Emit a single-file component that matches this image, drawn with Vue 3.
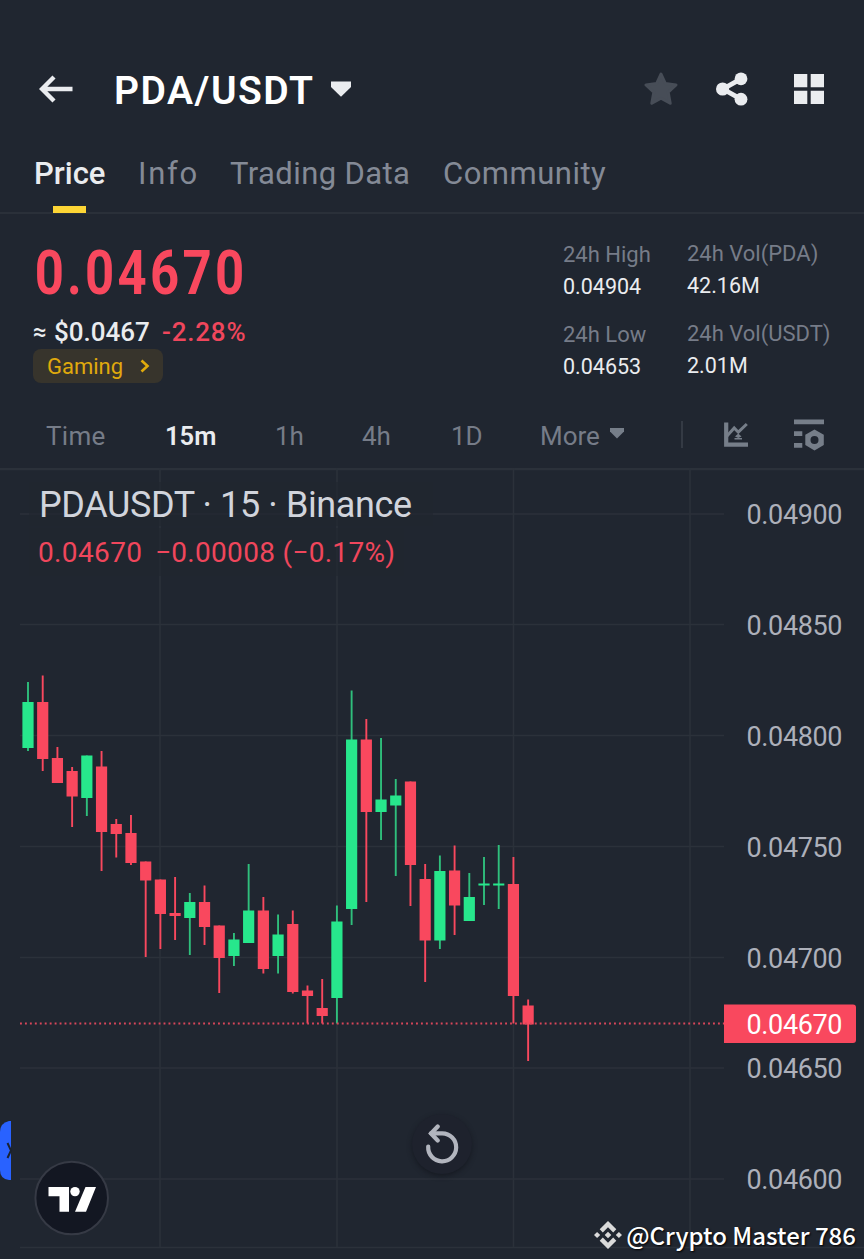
<script setup>
import { ref } from 'vue'

const tabs = ['Price', 'Info', 'Trading Data', 'Community']
const activeTab = ref('Price')

const intervals = ['Time', '15m', '1h', '4h', '1D']
const activeInterval = ref('15m')

const stats = [
  { label: '24h High', value: '0.04904' },
  { label: '24h Vol(PDA)', value: '42.16M' },
  { label: '24h Low', value: '0.04653' },
  { label: '24h Vol(USDT)', value: '2.01M' }
]

const gridX = [160, 337, 513.5, 690]
const priceLevels = [
  { label: '0.04900', y: 46 },
  { label: '0.04850', y: 156.5 },
  { label: '0.04800', y: 267.5 },
  { label: '0.04750', y: 378.5 },
  { label: '0.04700', y: 489.5 },
  { label: '0.04650', y: 600 },
  { label: '0.04600', y: 711 }
]

// [body top, body bottom, wick top, wick bottom, up?]
const rows = [
  [702, 748, 682, 751, 1],
  [702, 759, 675.5, 771, 0],
  [758, 783, 747, 783, 0],
  [771, 796.5, 767, 827, 0],
  [755.5, 798, 755.5, 816, 1],
  [766.5, 832, 751, 871, 0],
  [824, 834, 819, 857.5, 0],
  [833, 863, 815, 865, 0],
  [861.5, 880.5, 861.5, 957, 0],
  [879.5, 914, 879.5, 949, 0],
  [913, 916, 877, 940, 0],
  [902, 918, 893, 955, 1],
  [902, 927, 885.5, 945, 0],
  [925.5, 958, 925.5, 993, 0],
  [939.5, 956, 933, 966, 1],
  [910.5, 943, 864, 943, 1],
  [910.5, 969, 897, 973.5, 0],
  [934.5, 956, 914.5, 973.5, 1],
  [924, 992, 910.5, 993.5, 0],
  [990.5, 996, 985.5, 1023.5, 0],
  [1008, 1016, 979, 1023.5, 0],
  [921.5, 998, 905.5, 1023.5, 1],
  [739.5, 909, 690.5, 925, 1],
  [739.5, 812, 719, 902, 0],
  [799.5, 812, 738, 840, 1],
  [795.5, 805.5, 779, 876, 1],
  [781.5, 865, 781.5, 906, 0],
  [879, 940.5, 864, 982, 0],
  [871, 940.5, 855.5, 949, 1],
  [870.5, 905.5, 845.5, 935, 0],
  [897, 921, 873, 921, 1],
  [883.5, 885.5, 857, 905, 1],
  [883.5, 885.5, 845, 909, 1],
  [884, 996, 857, 1023.5, 0],
  [1005.5, 1024.5, 999.5, 1061, 0]
]

const candles = rows.map(([top, bottom, high, low, up], i) => ({
  x: 28 + i * 14.71,
  top: top - 468,
  height: bottom - top,
  high: high - 468,
  low: low - 468,
  color: up ? '#27e78c' : '#f9485e',
  wick: up ? '#2fbf7c' : '#f9485e'
}))
</script>

<template>
  <div class="screen">
    <header class="topbar">
      <svg class="back" width="34" height="28" viewBox="0 0 34 28">
        <path d="M15 2 L3 14 L15 26 M3 14 H33.5" fill="none" stroke="#eaecef" stroke-width="4.4" />
      </svg>
      <h1>PDA/USDT</h1>
      <svg class="caret" width="22" height="16" viewBox="0 0 22 16">
        <path d="M1 0.5 H21 V6 L11 15.8 L1 6 Z" fill="#eaecef" />
      </svg>
      <div class="actions">
        <svg width="34" height="34" viewBox="0 0 34 34">
          <path d="M17 2 L21.4 11.6 L32 12.9 L24.2 20.2 L26.2 31.3 L17 26.2 L7.8 31.3 L9.8 20.2 L2 12.9 L12.6 11.6 Z" fill="#474d57" stroke="#474d57" stroke-width="3" stroke-linejoin="round" />
        </svg>
        <svg width="32" height="34" viewBox="0 0 32 34">
          <path d="M25 6.8 L7 17 L25 27.2" fill="none" stroke="#eaecef" stroke-width="4.8" />
          <circle cx="25" cy="6.8" r="6.4" fill="#eaecef" />
          <circle cx="6.6" cy="17" r="6.6" fill="#eaecef" />
          <circle cx="25" cy="27.2" r="6.4" fill="#eaecef" />
        </svg>
        <svg width="30" height="30" viewBox="0 0 30 30" fill="#eaecef">
          <path d="M0 0H13.3V13.3H0Z M16.7 0H30V13.3H16.7Z M0 16.7H13.3V30H0Z M16.7 16.7H30V30H16.7Z" />
        </svg>
      </div>
    </header>

    <nav class="tabs">
      <a v-for="tab in tabs" :key="tab" :class="{ active: tab === activeTab }" @click="activeTab = tab">{{ tab }}</a>
    </nav>

    <section class="summary">
      <div class="quote">
        <div class="price">0.04670</div>
        <div class="fiat"><span class="approx">≈</span><span class="usd">$0.0467</span><span class="change">-2.28%</span></div>
        <div class="tag">
          <span>Gaming</span>
          <svg width="10" height="14" viewBox="0 0 10 14">
            <path d="M1.5 1.5 L7.5 7 L1.5 12.5" fill="none" stroke="#e0aa0c" stroke-width="2.6" />
          </svg>
        </div>
      </div>
      <dl class="stats">
        <div v-for="s in stats" :key="s.label" class="stat">
          <dt>{{ s.label }}</dt>
          <dd>{{ s.value }}</dd>
        </div>
      </dl>
    </section>

    <div class="intervals">
      <button v-for="i in intervals" :key="i" :class="{ active: i === activeInterval }" @click="activeInterval = i">{{ i }}</button>
      <button class="more">
        More
        <svg width="14" height="11" viewBox="0 0 14 11"><path d="M0 0H14V3.5L7 10.5L0 3.5Z" fill="#767e89" /></svg>
      </button>
      <span class="divider"></span>
      <svg class="draw" width="25" height="26" viewBox="0 0 25 26">
        <path d="M2.2 0.5 V22.7 H24" fill="none" stroke="#767e89" stroke-width="4.2" />
        <path d="M3 14 L10.2 6 L14.3 10.2 L22.8 2" fill="none" stroke="#767e89" stroke-width="3" />
        <path d="M14.3 11.5 L17.5 14.5 L14.3 16 H18 V17.5 H10.5 V16 H14.3 L11 14.5 Z" fill="#767e89" />
      </svg>
      <svg class="settings" width="32" height="32" viewBox="0 0 32 32" fill="#767e89">
        <path d="M1 0.5H31V5.2H1Z M1 12.2H9.3V17H1Z M1 24H9.3V28.8H1Z" />
        <path fill-rule="evenodd" d="M21.5 10.5 L30.8 15.8 V26 L21.5 31.5 L12.3 26 V15.8 Z M21.5 17 A4 4 0 1 0 21.5 25 A4 4 0 1 0 21.5 17 Z" />
      </svg>
    </div>

    <main class="chart">
      <svg width="864" height="791" viewBox="0 0 864 791">
        <g stroke="#2b313a" stroke-width="1.6">
          <line x1="0" x2="864" y1="1" y2="1" stroke-width="2.4" />
          <line v-for="x in gridX" :key="x" :x1="x" :x2="x" y1="0" y2="779" />
          <line v-for="p in priceLevels" :key="p.label" x1="20" x2="724" :y1="p.y" :y2="p.y" />
          <line x1="20" x2="864" y1="779.5" y2="779.5" />
        </g>

        <rect x="29" y="14" width="404" height="44" fill="#202630" opacity="0.65" />
        <rect x="29" y="60" width="375" height="48" fill="#202630" opacity="0.65" />
        <text x="39" y="48.5" font-size="36" fill="#d1d4dc" textLength="373">PDAUSDT · 15 · Binance</text>
        <g font-size="28" fill="#f0465c">
          <text x="38" y="94" textLength="104">0.04670</text>
          <text x="155" y="94" textLength="240">−0.00008 (−0.17%)</text>
        </g>

        <g v-for="c in candles" :key="c.x">
          <line :x1="c.x" :x2="c.x" :y1="c.high" :y2="c.low" :stroke="c.wick" stroke-width="1.9" />
          <rect :x="c.x - 5.6" :y="c.top" width="11.2" :height="c.height" :fill="c.color" />
        </g>

        <line x1="20" x2="724" y1="555.5" y2="555.5" stroke="#d9465a" stroke-width="1.8" stroke-dasharray="1.9 3.05" />

        <g font-size="27" fill="#adb0ba">
          <text v-for="p in priceLevels" :key="p.label" x="746.5" :y="p.y + 10" textLength="96">{{ p.label }}</text>
        </g>
        <path d="M724 536.5 H853 Q856 536.5 856 539.5 V572 Q856 575 853 575 H724 Z" fill="#f9485e" />
        <text x="746.5" y="565.5" font-size="27" fill="#fff" textLength="96">0.04670</text>

        <!-- drawer handle -->
        <path d="M11 653 H9 Q0 655 0 664 V702 Q0 711 9 712 H11 Z" fill="#2962ff" />
        <path d="M7.5 675 L11 682.5 L7.5 690" fill="none" stroke="#1b2230" stroke-width="2" />

        <!-- TradingView badge -->
        <circle cx="71.7" cy="730" r="36.3" fill="#131722" stroke="#363a45" stroke-width="2" />
        <path d="M48.5 719 H69 V743.7 H59.5 V728.3 H48.5 Z M85.5 719 H96 L86 743.7 H75 Z" fill="#fff" />
        <circle cx="75" cy="723.6" r="4.7" fill="#fff" />
      </svg>

      <button class="reset">
        <svg width="34" height="40" viewBox="0 0 34 40">
          <path d="M3.2 22.5 A14 14 0 1 0 17.2 9.3 H6" fill="none" stroke="#b2b5be" stroke-width="4.2" stroke-linecap="round" />
          <path d="M12.7 2.5 L6 9.5 L12.7 16.5" fill="none" stroke="#b2b5be" stroke-width="4.2" stroke-linecap="round" />
        </svg>
      </button>

      <div class="watermark">
        <svg width="28" height="28" viewBox="0 0 28 28" fill="#dadada">
          <path d="M14 0 L22.3 8.3 L19.2 11.4 L14 6.2 L8.8 11.4 L5.7 8.3 Z M14 28 L5.7 19.7 L8.8 16.6 L14 21.8 L19.2 16.6 L22.3 19.7 Z M3.1 10.9 L6.2 14 L3.1 17.1 L0 14 Z M24.9 10.9 L28 14 L24.9 17.1 L21.8 14 Z M14 10.7 L17.3 14 L14 17.3 L10.7 14 Z" />
        </svg>
        <span>@Crypto Master 786</span>
      </div>
    </main>
  </div>
</template>

<style>
body { background: #202630; }
</style>

<style scoped>
.screen { width: 864px; height: 1259px; overflow: hidden; background: #202630; color: #eaecef; font-family: Roboto, "Liberation Sans", sans-serif; }
button { padding: 0; border: none; background: none; font: inherit; color: inherit; }

.topbar { height: 80px; padding: 49px 40px 0 39px; display: flex; align-items: center; }
.topbar h1 { width: 199px; margin: 4px 17px 0 41px; font-size: 39px; font-weight: 600; letter-spacing: 1.5px; color: #fff; white-space: nowrap; }
.actions { margin-left: auto; display: flex; align-items: center; gap: 38px; }
.actions svg:last-child { margin-left: 8px; }

.tabs { height: 83px; padding-left: 34px; display: flex; gap: 33px; border-bottom: 2px solid #2a3039; font-size: 31px; line-height: 90px; color: #848a96; }
.tabs a { position: relative; height: 83px; white-space: nowrap; }
.tabs a:nth-child(1) { width: 71px; }
.tabs a:nth-child(2) { width: 59px; letter-spacing: 1.7px; }
.tabs a:nth-child(3) { width: 180px; letter-spacing: 0.4px; }
.tabs a:nth-child(4) { letter-spacing: 0.5px; }
.tabs a.active { color: #eaecef; font-weight: 500; }
.tabs a.active::after { content: ""; position: absolute; left: 19px; bottom: -1px; width: 33px; height: 7px; background: #fcd535; }

.summary { height: 187px; display: flex; justify-content: space-between; }
.quote { padding-left: 33px; }
.price { margin-top: 21px; padding-left: 2px; height: 78px; line-height: 76px; font-size: 62px; font-weight: 700; letter-spacing: 4px; color: #f9485e; transform: scaleX(0.82); transform-origin: left; white-space: nowrap; }
.fiat { display: flex; height: 36px; line-height: 38px; font-size: 26px; font-weight: 500; white-space: nowrap; }
.approx { width: 21px; font-size: 24px; }
.usd { width: 108px; }
.change { color: #f0465c; letter-spacing: 0.8px; }
.tag { box-sizing: border-box; width: 130px; height: 34px; padding: 0 13px 0 14px; display: flex; align-items: center; justify-content: space-between; border-radius: 8px; background: #37342c; color: #e0aa0c; font-size: 22px; }
.stats { width: 301px; margin: 24px 0 0; display: grid; grid-template-columns: 124px 1fr; grid-auto-rows: 80px; align-content: start; }
.stat:nth-child(odd) { padding-top: 1px; }
.stat dt { height: 32px; line-height: 32px; font-size: 22px; color: #767c88; white-space: nowrap; }
.stat dd { margin: 0; line-height: 31px; font-size: 21.5px; }

.intervals { height: 67px; padding-left: 46px; display: flex; align-items: center; font-size: 26px; color: #767c88; }
.intervals button { padding-top: 2px; text-align: left; }
.intervals button:nth-child(1) { width: 119px; letter-spacing: 0.3px; }
.intervals button:nth-child(2) { width: 110px; }
.intervals button:nth-child(3) { width: 87px; }
.intervals button:nth-child(4) { width: 89px; }
.intervals button:nth-child(5) { width: 89px; }
.intervals button.active { color: #eaecef; font-size: 25.5px; font-weight: 600; }
.intervals .more { width: 141px; display: flex; align-items: center; gap: 10px; }
.more svg { margin-top: -4px; }
.divider { width: 2px; height: 27px; background: #343a44; }
.draw { margin-left: 41px; }
.settings { margin-left: 44px; }

.chart { position: relative; height: 791px; }
.chart > svg { display: block; }
.reset { position: absolute; left: 412px; top: 646px; width: 60px; height: 60px; display: grid; place-items: center; border-radius: 50%; background: #1e222d; box-shadow: 0 2px 5px #161a22; }
.watermark { position: absolute; right: 8px; bottom: 5px; display: flex; align-items: center; gap: 4px; color: #fff; font-family: "Noto Sans CJK SC", "Noto Sans", sans-serif; font-size: 24px; font-weight: 500; line-height: 38px; text-shadow: 1px 1px 2px #000; white-space: nowrap; }
</style>
